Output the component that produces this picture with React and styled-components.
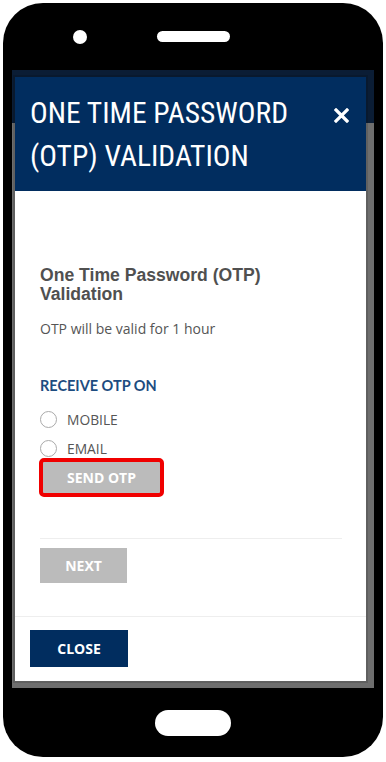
import React from "react";
import styled, { createGlobalStyle } from "styled-components";

const Global = createGlobalStyle`
  html, body { margin: 0; padding: 0; background: #ffffff; }
  * { box-sizing: border-box; }
`;

const Page = styled.div`
  width: 386px;
  height: 762px;
  padding: 3px;
  background: #ffffff;
`;

const Phone = styled.div`
  width: 380px;
  height: 754px;
  background: #000;
  border-radius: 40px;
  display: flex;
  flex-direction: column;
`;

const TopBezel = styled.div`
  height: 67px;
  display: flex;
  align-items: center;
  padding: 0 0 0 70px;
  gap: 70px;
`;

const Camera = styled.div`
  width: 14px;
  height: 14px;
  border-radius: 50%;
  background: #fff;
`;

const Speaker = styled.div`
  width: 73px;
  height: 11px;
  border-radius: 6px;
  background: #fff;
`;

const Screen = styled.div`
  margin: 0 9px;
  height: 618px;
  padding: 7px 8px 7px 3px;
  background: linear-gradient(#0b1d35 0, #0b1d35 53px, #6e6e6e 53px);
`;

const Modal = styled.div`
  height: 604px;
  background: #fff;
  display: flex;
  flex-direction: column;
  box-shadow: 0 0 0 2px rgba(0, 0, 0, 0.12);
`;

const Header = styled.div`
  height: 114px;
  background: #012d5f;
  display: flex;
  justify-content: space-between;
  align-items: flex-start;
  padding: 15px 17px 0 15px;
`;

const HeaderTitle = styled.h1`
  margin: 0;
  color: #fff;
  font-family: "Roboto Condensed", "Liberation Sans Narrow", "DejaVu Sans Condensed", Roboto, sans-serif;
  font-weight: 400;
  font-size: 29.5px;
  line-height: 43px;
`;

const CloseX = styled.svg`
  width: 15px;
  height: 15px;
  margin-top: 16px;
  flex: none;
`;

const Body = styled.div`
  flex: 1;
  padding: 75px 24px 0 25px;
  display: flex;
  flex-direction: column;
  align-items: flex-start;
`;

const Title = styled.h2`
  margin: 0;
  font-family: "Liberation Sans", Arial, sans-serif;
  font-weight: 700;
  font-size: 17.6px;
  line-height: 19px;
  color: #505050;
`;

const Note = styled.p`
  margin: 16px 0 0;
  font-family: "Open Sans", sans-serif;
  font-size: 14px;
  line-height: 18px;
  color: #555;
`;

const Label = styled.div`
  margin-top: 39px;
  font-family: Lato, "Open Sans", sans-serif;
  font-weight: 700;
  font-size: 14.5px;
  line-height: 18px;
  color: #1d4c80;
`;

const Options = styled.div`
  margin-top: 14px;
  display: flex;
  flex-direction: column;
  gap: 9px;
`;

const Option = styled.label`
  height: 20px;
  display: flex;
  align-items: center;
  gap: 10px;
  font-family: "Open Sans", sans-serif;
  font-size: 13.8px;
  color: #555;
`;

const Radio = styled.span`
  width: 17px;
  height: 17px;
  border-radius: 50%;
  border: 1px solid #aaa;
  background: #fff;
  flex: none;
`;

const Button = styled.button`
  height: ${(p) => p.$h}px;
  width: ${(p) => p.$w}px;
  border: none;
  background: ${(p) => (p.$primary ? "#012d5f" : "#bbbbbb")};
  color: #fff;
  font-family: "Open Sans", sans-serif;
  font-weight: 700;
  font-size: 14px;
  padding: 0;
  display: flex;
  align-items: center;
  justify-content: center;
`;

const Highlighted = styled(Button)`
  border: 4px solid #f00000;
  border-radius: 5px;
  margin-left: -1px;
`;

const Divider = styled.hr`
  align-self: stretch;
  margin: 41px 0 9px;
  border: none;
  border-top: 1px solid #eeeeee;
`;

const Footer = styled.div`
  border-top: 1px solid #eeeeee;
  padding: 13px 15px 14px;
`;

const BottomBezel = styled.div`
  flex: 1;
  display: flex;
  align-items: center;
  justify-content: center;
`;

const HomeButton = styled.div`
  width: 76px;
  height: 26px;
  border-radius: 13px;
  background: #fff;
`;

export default function App() {
  return (
    <Page>
      <Global />
      <Phone>
        <TopBezel>
          <Camera />
          <Speaker />
        </TopBezel>
        <Screen>
          <Modal>
            <Header>
              <HeaderTitle>
                ONE TIME PASSWORD
                <br />
                (OTP) VALIDATION
              </HeaderTitle>
              <CloseX viewBox="0 0 15 15">
                <path d="M2 2 L13 13 M13 2 L2 13" stroke="#fff" strokeWidth="3.2" strokeLinecap="square" />
              </CloseX>
            </Header>
            <Body>
              <Title>
                One Time Password (OTP)
                <br />
                Validation
              </Title>
              <Note>OTP will be valid for 1 hour</Note>
              <Label>RECEIVE OTP ON</Label>
              <Options>
                <Option>
                  <Radio />
                  MOBILE
                </Option>
                <Option>
                  <Radio />
                  EMAIL
                </Option>
              </Options>
              <Highlighted $w={125} $h={39}>SEND OTP</Highlighted>
              <Divider />
              <Button $w={87} $h={35}>NEXT</Button>
            </Body>
            <Footer>
              <Button $primary $w={98} $h={37}>CLOSE</Button>
            </Footer>
          </Modal>
        </Screen>
        <BottomBezel>
          <HomeButton />
        </BottomBezel>
      </Phone>
    </Page>
  );
}
